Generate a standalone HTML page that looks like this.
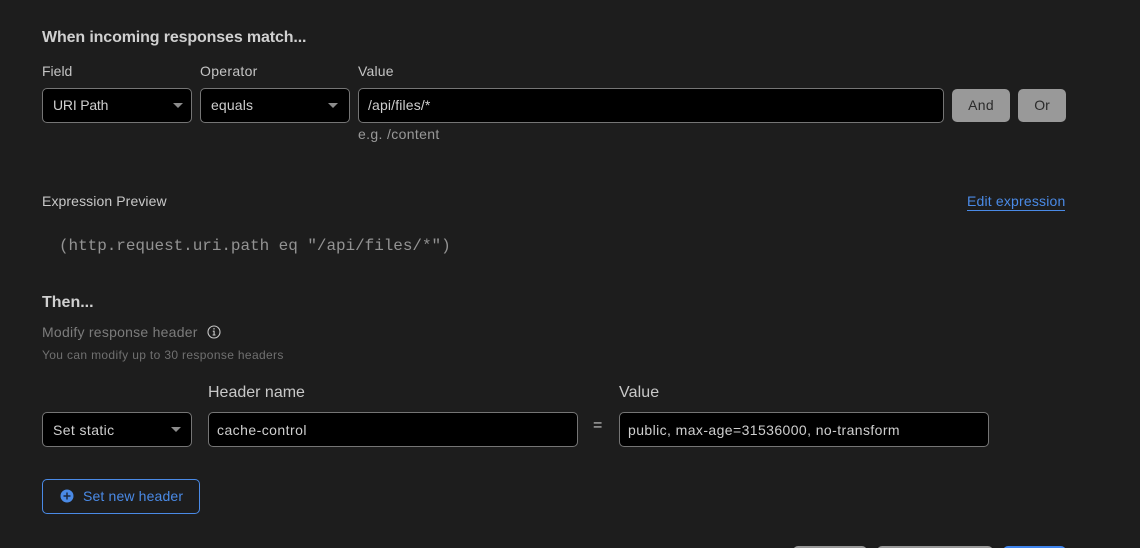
<!DOCTYPE html>
<html><head><meta charset="utf-8">
<style>
html,body{margin:0;padding:0;background:#1d1d1d;}
#r{position:relative;width:1140px;height:548px;overflow:hidden;background:#1d1d1d;font-family:"Liberation Sans",sans-serif;font-size:14px;color:#d9d9d9;}
.t{position:absolute;white-space:nowrap;line-height:18px;}
.b{position:absolute;box-sizing:border-box;background:#000;border:1px solid #757575;border-radius:5px;height:35px;line-height:33px;padding-left:10px;color:#cfcfcf;white-space:nowrap;}
.a{position:absolute;width:0;height:0;border-left:5px solid transparent;border-right:5px solid transparent;border-top:5px solid #8c8c8c;}
.g{position:absolute;box-sizing:border-box;background:#999;border-radius:5px;height:33px;line-height:33px;text-align:center;color:#2b2b2b;}
.s{position:absolute;top:546px;height:10px;border-radius:5px;background:#999;}
</style></head><body>
<div id="r">
<div class="t" style="left:42px;top:29px;font-size:16px;font-weight:bold;color:#d0d0d0;letter-spacing:-.13px">When incoming responses match...</div>
<div class="t" style="left:42px;top:62px;color:#c4c4c4">Field</div>
<div class="t" style="left:200px;top:62px;color:#c4c4c4;letter-spacing:.3px">Operator</div>
<div class="t" style="left:358px;top:62px;color:#c4c4c4;letter-spacing:.2px">Value</div>
<div class="b" style="left:42px;top:88px;width:150px;letter-spacing:-.2px">URI Path</div><div class="a" style="left:173px;top:103px"></div>
<div class="b" style="left:200px;top:88px;width:150px;letter-spacing:.15px">equals</div><div class="a" style="left:328px;top:103px"></div>
<div class="b" style="left:358px;top:88px;width:586px;padding-left:9px;letter-spacing:.15px">/api/files/*</div>
<div class="g" style="left:952px;top:89px;width:58px;letter-spacing:.3px">And</div>
<div class="g" style="left:1018px;top:89px;width:48px">Or</div>
<div class="t" style="left:358px;top:125px;color:#999;letter-spacing:.35px">e.g. /content</div>
<div class="t" style="left:42px;top:192px;color:#c8c8c8;letter-spacing:.1px">Expression Preview</div>
<div class="t" style="left:967px;top:193px;color:#4a8ae6;letter-spacing:.18px;border-bottom:1px solid #4a8ae6;line-height:17px;height:17px">Edit expression</div>
<div class="t" style="left:59px;top:237px;font-family:'Liberation Mono',monospace;font-size:16px;color:#939393;letter-spacing:-.05px">(http.request.uri.path eq "/api/files/*")</div>
<div class="t" style="left:42px;top:294px;font-size:16px;font-weight:bold;color:#d0d0d0">Then...</div>
<div class="t" style="left:42px;top:323px;color:#7c7c7c;letter-spacing:.25px">Modify response header</div>
<svg style="position:absolute;left:207px;top:325px" width="14" height="14" viewBox="0 0 14 14" fill="none" stroke="#c8c8c8"><circle cx="7" cy="7" r="6" stroke-width="1.1"/><path d="M5.8 6.2H7.1V10M5.6 10H8.5" stroke-width="1.1"/><path d="M6.4 3.8H7.6" stroke-width="1.4"/></svg>
<div class="t" style="left:42px;top:346px;font-size:12px;color:#707070;letter-spacing:.35px">You can modify up to 30 response headers</div>
<div class="t" style="left:208px;top:384px;font-size:16px;color:#c8c8c8">Header name</div>
<div class="t" style="left:619px;top:384px;font-size:16px;color:#c8c8c8;letter-spacing:.1px">Value</div>
<div class="b" style="left:42px;top:412px;width:150px;line-height:35px;letter-spacing:.4px">Set static</div><div class="a" style="left:171px;top:427px;"></div>
<div class="b" style="left:208px;top:412px;width:370px;line-height:35px;padding-left:8px;letter-spacing:.45px">cache-control</div>
<div class="t" style="left:593px;top:417px;font-size:16px;color:#c8c8c8">=</div>
<div class="b" style="left:619px;top:412px;width:370px;line-height:35px;padding-left:8px;letter-spacing:.41px">public, max-age=31536000, no-transform</div>
<div style="position:absolute;box-sizing:border-box;left:42px;top:479px;width:158px;height:35px;border:1px solid #4a8ae6;border-radius:5px"></div>
<svg style="position:absolute;left:60px;top:489px" width="14" height="14" viewBox="0 0 14 14"><circle cx="7" cy="7" r="6.5" fill="#4a8ae6"/><path d="M7 3.5V10.5M3.5 7H10.5" stroke="#1d2a40" stroke-width="1.5"/></svg>
<div class="t" style="left:83px;top:487px;color:#4a8ae6;letter-spacing:.15px">Set new header</div>
<div class="s" style="left:793px;width:74px"></div>
<div class="s" style="left:877px;width:116px"></div>
<div class="s" style="left:1003px;width:63px;background:#3f85ee"></div>
</div>
</body></html>
